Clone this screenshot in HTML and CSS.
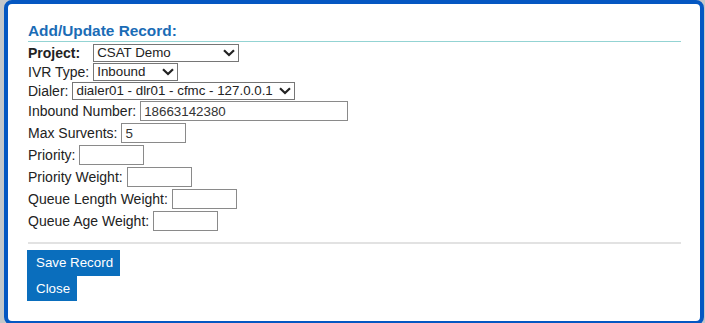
FILE: index.html
```html
<!DOCTYPE html>
<html>
<head>
<meta charset="utf-8">
<link rel="stylesheet" href="styles.css">
</head>
<body>
<div class="modal">
  <h3 class="title">Add/Update Record:</h3>
  <form class="form">
    <div class="row sel-row">
      <label class="lbl bold lbl-project">Project:</label>
      <span class="sel sel-project"><select><option>CSAT Demo</option></select><svg class="chev" viewBox="0 0 12 8" width="12" height="8"><path d="M1 1.2 L6 6 L11 1.2" fill="none" stroke="#222" stroke-width="2.2"/></svg></span>
    </div>
    <div class="row sel-row">
      <label class="lbl">IVR Type:</label>
      <span class="sel sel-ivr"><select><option>Inbound</option></select><svg class="chev" viewBox="0 0 12 8" width="12" height="8"><path d="M1 1.2 L6 6 L11 1.2" fill="none" stroke="#222" stroke-width="2.2"/></svg></span>
    </div>
    <div class="row sel-row">
      <label class="lbl">Dialer:</label>
      <span class="sel sel-dialer"><select><option>dialer01 - dlr01 - cfmc - 127.0.0.1</option></select><svg class="chev" viewBox="0 0 12 8" width="12" height="8"><path d="M1 1.2 L6 6 L11 1.2" fill="none" stroke="#222" stroke-width="2.2"/></svg></span>
    </div>
    <div class="row inp-row">
      <label class="lbl">Inbound Number:</label>
      <input class="inp inp-wide" type="text" value="18663142380">
    </div>
    <div class="row inp-row">
      <label class="lbl">Max Survents:</label>
      <input class="inp" type="text" value="5">
    </div>
    <div class="row inp-row">
      <label class="lbl">Priority:</label>
      <input class="inp" type="text" value="">
    </div>
    <div class="row inp-row">
      <label class="lbl">Priority Weight:</label>
      <input class="inp" type="text" value="">
    </div>
    <div class="row inp-row">
      <label class="lbl">Queue Length Weight:</label>
      <input class="inp" type="text" value="">
    </div>
    <div class="row inp-row">
      <label class="lbl">Queue Age Weight:</label>
      <input class="inp" type="text" value="">
    </div>
  </form>
  <hr class="sep">
  <div class="buttons">
    <button class="btn" type="button">Save Record</button>
    <button class="btn" type="button">Close</button>
  </div>
</div>
</body>
</html>
```
FILE: styles.css
```css
html, body {
  margin: 0;
  padding: 0;
  overflow: hidden;
  width: 705px;
  height: 323px;
}
body {
  background: #c3c7ca;
  font-family: "Liberation Sans", Arial, sans-serif;
  font-size: 14px;
  color: #222;
}
.modal {
  box-sizing: border-box;
  margin-left: 4px;
  width: 700px;
  height: 325px;
  background: #fff;
  border: 4px solid #0457c2;
  border-radius: 8px;
  padding: 18px 19px 0 20px;
}
.title {
  margin: 0;
  font-size: 15.4px;
  line-height: 17px;
  font-weight: bold;
  color: #1a6cb6;
  padding-bottom: 2px;
  border-bottom: 1px solid #93d3d3;
}
.form {
  margin: 1px 0 0 0;
  display: flex;
  flex-direction: column;
  align-items: flex-start;
}
.row {
  display: flex;
  align-items: center;
}
.sel-row {
  height: 19px;
}
.inp-row {
  height: 22px;
}
.lbl {
  white-space: nowrap;
  margin-right: 4px;
}
.bold {
  font-weight: bold;
}
.lbl-project {
  margin-right: 13px;
}
.sel {
  position: relative;
  display: inline-block;
}
.sel select {
  appearance: none;
  -webkit-appearance: none;
  box-sizing: border-box;
  height: 18px;
  margin: 0;
  padding: 0 0 0 3px;
  border: 1px solid #767676;
  border-radius: 0;
  background: #fff;
  font-family: "Liberation Sans", Arial, sans-serif;
  font-size: 13.33px;
  color: #222;
  line-height: 16px;
}
.sel-project select { width: 146px; }
.sel-ivr select { width: 85px; }
.sel-dialer select { width: 223px; }
.chev {
  position: absolute;
  right: 4px;
  top: 5px;
  pointer-events: none;
}
.inp {
  box-sizing: border-box;
  width: 65px;
  height: 20px;
  margin: 0;
  padding: 0 3px;
  border: 1px solid #8a8a8a;
  border-radius: 0;
  font-family: "Liberation Sans", Arial, sans-serif;
  font-size: 13.33px;
  color: #333;
}
.inp-wide {
  width: 208px;
}
.sep {
  margin: 10px 0 0 0;
  border: 0;
  border-top: 2px solid #e2e2e2;
  height: 0;
}
.buttons {
  margin-top: 6px;
  display: flex;
  flex-direction: column;
  align-items: flex-start;
}
.btn {
  margin: 0;
  padding: 0 7px 0 9px;
  height: 26px;
  border: 0;
  border-radius: 0;
  background: #0a6ebd;
  color: #fff;
  font-family: "Liberation Sans", Arial, sans-serif;
  font-size: 13.33px;
  line-height: 26px;
  margin-left: -1px;
}
.btn + .btn {
  height: 25px;
  line-height: 25px;
}
```
